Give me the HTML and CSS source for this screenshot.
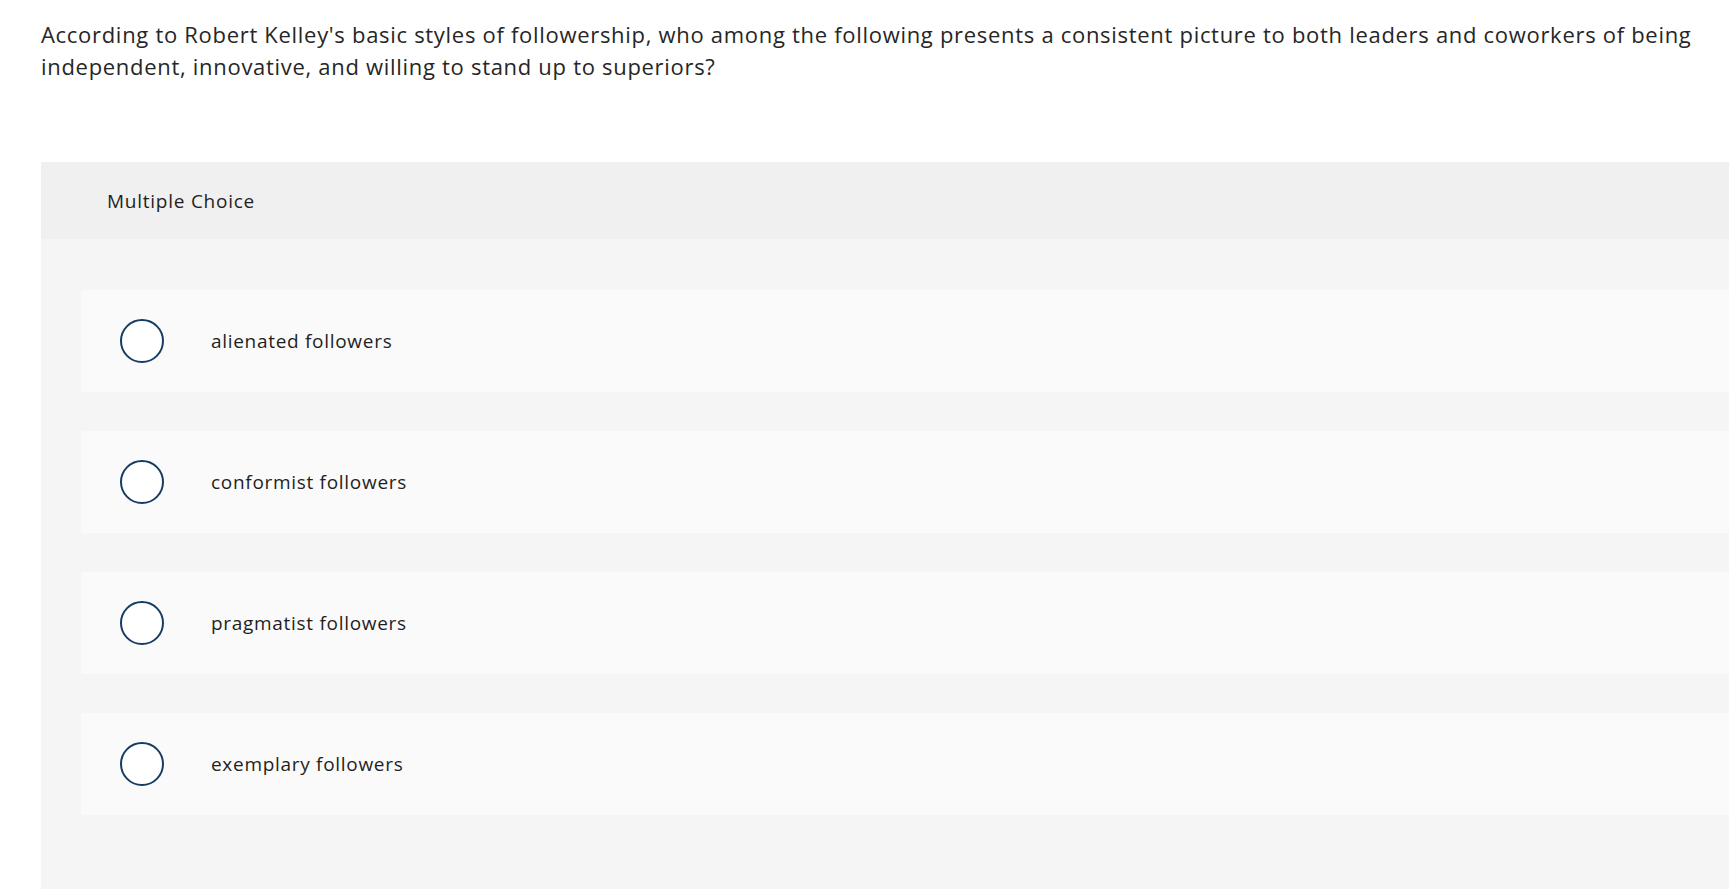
FILE: index.html
```html
<!DOCTYPE html>
<html lang="en">
<head>
<meta charset="utf-8">
<title>Multiple Choice</title>
<link rel="stylesheet" href="styles.css">
</head>
<body>
<div class="page">
  <p class="question">According to Robert Kelley's basic styles of followership, who among the following presents a consistent picture to both leaders and coworkers of being independent, innovative, and willing to stand up to superiors?</p>
  <section class="mc">
    <div class="mc-head">Multiple Choice</div>
    <div class="mc-body">
      <label class="choice"><span class="radio"></span><span class="label">alienated followers</span></label>
      <label class="choice"><span class="radio"></span><span class="label">conformist followers</span></label>
      <label class="choice"><span class="radio"></span><span class="label">pragmatist followers</span></label>
      <label class="choice"><span class="radio"></span><span class="label">exemplary followers</span></label>
    </div>
  </section>
</div>
</body>
</html>
```
FILE: styles.css
```css
html, body {
  margin: 0;
  padding: 0;
  background: #ffffff;
  overflow: hidden;
}
.page {
  width: 1729px;
  height: 889px;
  overflow: hidden;
  font-family: "Open Sans", "Liberation Sans", Arial, sans-serif;
  color: #262626;
}
.question {
  margin: 0;
  padding: 18px 20px 0 41px;
  font-size: 22px;
  letter-spacing: 0.7px;
  line-height: 32px;
}
.mc {
  margin: 80px 0 0 41px;
  width: 1800px;
}
.mc-head {
  height: 77px;
  background: #f0f0f0;
  display: flex;
  align-items: center;
  padding-left: 66px;
  font-size: 19px;
  letter-spacing: 0.75px;
  color: #1f1f1f;
}
.mc-body {
  background: #f5f5f5;
  padding: 51px 0 200px 40px;
  display: flex;
  flex-direction: column;
  gap: 39px;
}
.choice {
  height: 102px;
  background: #fafafa;
  border-radius: 3px 0 0 3px;
  display: flex;
  align-items: center;
  padding-left: 39px;
}
.radio {
  width: 40px;
  height: 40px;
  border: 2px solid #163c63;
  border-radius: 50%;
  background: #fff;
  flex: none;
}
.label {
  margin-left: 47px;
  font-size: 19px;
  letter-spacing: 0.7px;
  color: #1f1f1f;
}
```
